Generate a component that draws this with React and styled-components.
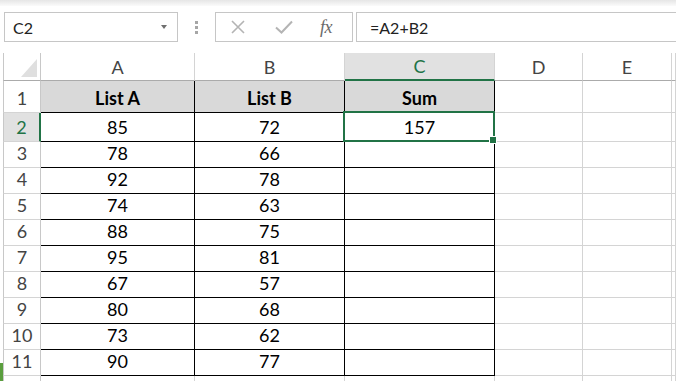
import React from "react";
import styled, { createGlobalStyle } from "styled-components";

const Global = createGlobalStyle`
  html, body { margin: 0; padding: 0; background: #fff; }
  body { font-family: Lato, "Open Sans", sans-serif; }
  * { box-sizing: border-box; }
`;

const Page = styled.div`
  width: 676px;
  height: 381px;
  overflow: hidden;
  position: relative;
  background: #fff;
  display: flex;
  flex-direction: column;
`;

const Shade = styled.div`
  height: 6px;
  background: linear-gradient(#e6e6e6, #fbfbfb);
  flex: none;
`;

const FormulaBar = styled.div`
  display: flex;
  align-items: stretch;
  height: 30px;
  margin: 6px 0 11px 4px;
  flex: none;
`;

const Box = styled.div`
  border: 1px solid #c6c6c6;
  background: #fff;
  display: flex;
  align-items: center;
  color: #222;
  font-size: 16px;
`;

const NameBox = styled(Box)`
  width: 174px;
  padding: 0 8px;
  justify-content: space-between;
`;

const Arrow = styled.span`
  width: 0;
  height: 0;
  border-left: 3.5px solid transparent;
  border-right: 3.5px solid transparent;
  border-top: 4px solid #6f6f6f;
  margin-right: 2px;
`;

const Dots = styled.div`
  width: 37px;
  display: flex;
  flex-direction: column;
  align-items: center;
  justify-content: center;
  gap: 2px;
  & > span { width: 3px; height: 3px; background: #a6a6a6; }
`;

const FxBox = styled(Box)`
  width: 138px;
  padding-left: 14px;
  gap: 0;
`;

const IconSlot = styled.span`
  width: ${(p) => p.$w}px;
  display: flex;
  align-items: center;
`;

const Fx = styled.span`
  font-family: "Liberation Serif", "DejaVu Serif", serif;
  font-style: italic;
  font-size: 18px;
  color: #6a6a6a;
  letter-spacing: -0.5px;
`;

const FormulaBox = styled(Box)`
  flex: 1;
  margin-left: 3px;
  padding-left: 13px;
  border-right: none;
`;

const Sheet = styled.div`
  display: grid;
  margin-left: 3px;
  grid-template-columns: 38px 154px 150px 150px 88px 89px 1fr;
  grid-template-rows: 28px 32px 29px repeat(9, 26px) 1fr;
  flex: 1;
  font-size: 18px;
  line-height: 18px;
`;

const HeadCell = styled.div`
  display: flex;
  justify-content: center;
  align-items: flex-end;
  padding-bottom: 4px;
  color: ${(p) => (p.$sel ? "#217346" : "#444")};
  background: ${(p) => (p.$sel ? "#e1e1e1" : "#fff")};
  border-right: 1px solid #d4d4d4;
  border-bottom: ${(p) => (p.$sel ? "2px solid #217346" : "1px solid #ababab")};
`;

const Corner = styled.div`
  position: relative;
  border-left: 1px solid #c8c8c8;
  border-right: 1px solid #c8c8c8;
  border-bottom: 1px solid #ababab;
  &::after {
    content: "";
    position: absolute;
    right: 3px;
    bottom: 3px;
    width: 0;
    height: 0;
    border-left: 16px solid transparent;
    border-bottom: 18px solid #dfdfdf;
  }
`;

const RowHead = styled.div`
  display: flex;
  justify-content: center;
  align-items: flex-end;
  padding-bottom: 5px;
  color: ${(p) => (p.$sel ? "#217346" : "#444")};
  background: ${(p) => (p.$sel ? "#e1e1e1" : "#fff")};
  border-left: 1px solid #c8c8c8;
  border-right: ${(p) => (p.$sel ? "2px solid #217346" : "1px solid #c8c8c8")};
  border-bottom: 1px solid #d4d4d4;
`;

const Cell = styled.div`
  position: relative;
  display: flex;
  justify-content: center;
  align-items: flex-end;
  padding-bottom: 5px;
  color: #000;
  font-weight: ${(p) => (p.$bold ? 700 : 400)};
  background: ${(p) => (p.$fill ? "#d9d9d9" : "#fff")};
  border-right: 1px solid ${(p) => (p.$table ? "#000" : "#d4d4d4")};
  border-bottom: 1px solid ${(p) => (p.$table ? "#000" : "#d4d4d4")};
  z-index: ${(p) => (p.$active ? 2 : "auto")};
`;

const Selection = styled.div`
  position: absolute;
  left: -2px;
  top: -2px;
  right: -1px;
  bottom: -1px;
  border: 2px solid #217346;
  pointer-events: none;
  &::after {
    content: "";
    position: absolute;
    right: -4px;
    bottom: -4px;
    width: 6px;
    height: 6px;
    background: #217346;
    border: 1px solid #fff;
  }
`;

const SideTab = styled.div`
  position: absolute;
  left: 0;
  bottom: 0;
  width: 3px;
  height: 18px;
  background: #5a9e3e;
`;

const XIcon = () => (
  <svg width="16" height="14" viewBox="0 0 16 14">
    <path d="M2 1 L14 13 M14 1 L2 13" stroke="#b4b4b4" strokeWidth="1.6" fill="none" />
  </svg>
);

const CheckIcon = () => (
  <svg width="18" height="14" viewBox="0 0 18 14">
    <path d="M1 7.5 L6.5 12.5 L17 1.5" stroke="#b4b4b4" strokeWidth="2" fill="none" />
  </svg>
);

const listA = [85, 78, 92, 74, 88, 95, 67, 80, 73, 90];
const listB = [72, 66, 78, 63, 75, 81, 57, 68, 62, 77];
const cols = ["A", "B", "C", "D", "E", ""];

export default function App() {
  const rows = [];
  rows.push(["List A", "List B", "Sum"]);
  listA.forEach((a, i) => rows.push([a, listB[i], i === 0 ? 157 : ""]));

  return (
    <Page>
      <Global />
      <Shade />
      <FormulaBar>
        <NameBox>
          <span>C2</span>
          <Arrow />
        </NameBox>
        <Dots>
          <span />
          <span />
          <span />
        </Dots>
        <FxBox>
          <IconSlot $w={45}><XIcon /></IconSlot>
          <IconSlot $w={45}><CheckIcon /></IconSlot>
          <Fx>fx</Fx>
        </FxBox>
        <FormulaBox>=A2+B2</FormulaBox>
      </FormulaBar>
      <Sheet>
        <Corner />
        {cols.map((c, i) => (
          <HeadCell key={"h" + i} $sel={c === "C"}>{c}</HeadCell>
        ))}
        {rows.map((r, ri) => {
          const active = (ci) => ri === 1 && ci === 2;
          return (
            <React.Fragment key={"r" + ri}>
              <RowHead $sel={ri === 1}>{ri + 1}</RowHead>
              {r.map((v, ci) => (
                <Cell key={ci} $table $bold={ri === 0} $fill={ri === 0} $active={active(ci)}>
                  {v}
                  {active(ci) && <Selection />}
                </Cell>
              ))}
              <Cell />
              <Cell />
              <Cell />
            </React.Fragment>
          );
        })}
        <RowHead />
        {cols.map((c, i) => (
          <Cell key={"l" + i} />
        ))}
      </Sheet>
      <SideTab />
    </Page>
  );
}
